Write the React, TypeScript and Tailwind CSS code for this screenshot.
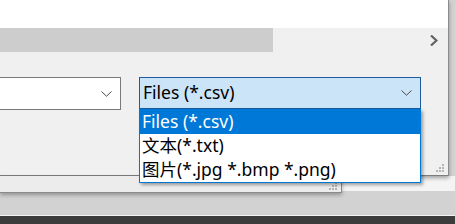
const font = "font-['Segoe_UI','Noto_Sans','Noto_Sans_CJK_SC',sans-serif]"

function Chevron() {
  return (
    <svg width="11" height="6" viewBox="0 0 11 6" className="block">
      <path d="M0.5 0.5 L5.5 5.2 L10.5 0.5" fill="none" stroke="#4a4a4a" strokeWidth="1" />
    </svg>
  )
}

function Grip({ className }: { className: string }) {
  const dots = [
    [6, 0],
    [3, 3],
    [6, 3],
    [0, 6],
    [3, 6],
    [6, 6],
  ]
  return (
    <svg width="8" height="8" viewBox="0 0 8 8" className={className}>
      {dots.map(([x, y]) => (
        <rect key={`${x}-${y}`} x={x} y={y} width="2" height="2" fill="#b4b4b4" />
      ))}
    </svg>
  )
}

export default function App() {
  const items = ['Files (*.csv)', '文本(*.txt)', '图片(*.jpg *.bmp *.png)']

  return (
    <div className={`relative h-[224px] w-[455px] overflow-hidden bg-[#d2d2d2] ${font}`}>
      <div className="relative flex h-[176px] w-[449px] flex-col border-r border-b border-r-[#8c8c8c] border-b-[#7c7c7c] bg-[#f0f0f0] shadow-[0_2px_4px_rgba(0,0,0,0.35)]">
        <div className="h-[28px] bg-white" />
        <div className="flex h-[24px] items-center">
          <div className="h-full w-[273px] bg-[#cdcdcd]" />
          <div className="flex-1" />
          <svg width="8" height="11" viewBox="0 0 8 11" className="mr-[10px]">
            <path d="M1 0.5 L6.5 5.5 L1 10.5" fill="none" stroke="#606060" strokeWidth="2.2" />
          </svg>
        </div>
        <div className="flex items-start pt-[25px]">
          <div className="-ml-[10px] flex h-[33px] w-[131px] items-center justify-end border border-[#7a7a7a] bg-white pr-[8px]">
            <Chevron />
          </div>
          <div className="ml-[18px] flex h-[32px] w-[282px] items-center justify-between border border-[#1a5c9e] bg-[#cce4f7] pl-[3px] pr-[8px] text-[17.5px] leading-none text-black">
            <span>Files (*.csv)</span>
            <Chevron />
          </div>
        </div>
        <Grip className="absolute right-[4px] bottom-[3px]" />
      </div>

      <div className="flex h-[17px]">
        <div className="relative h-full w-[342px] border-r border-b border-[#8a8a8a] bg-[#ececec] shadow-[0_2px_4px_rgba(0,0,0,0.3)]">
          <Grip className="absolute right-[4px] bottom-[2px]" />
        </div>
        <div className="h-[15px] flex-1 bg-[#f4f4f4]" />
      </div>
      <div className="h-[22px]" />
      <div className="h-px bg-[#f4f4f4]" />
      <div className="h-[10px] bg-[#3c3c3c]" />

      <div className="absolute top-[109px] left-[139px] w-[282px] border border-[#0078d7] bg-white text-[17.5px] leading-none text-black shadow-[2px_2px_3px_rgba(0,0,0,0.35)]">
        {items.map((t, i) => (
          <div
            key={t}
            className={`flex h-[24px] items-center pl-[2px] ${i === 0 ? 'bg-[#0078d7] text-white' : ''}`}
          >
            {t}
          </div>
        ))}
      </div>
    </div>
  )
}
